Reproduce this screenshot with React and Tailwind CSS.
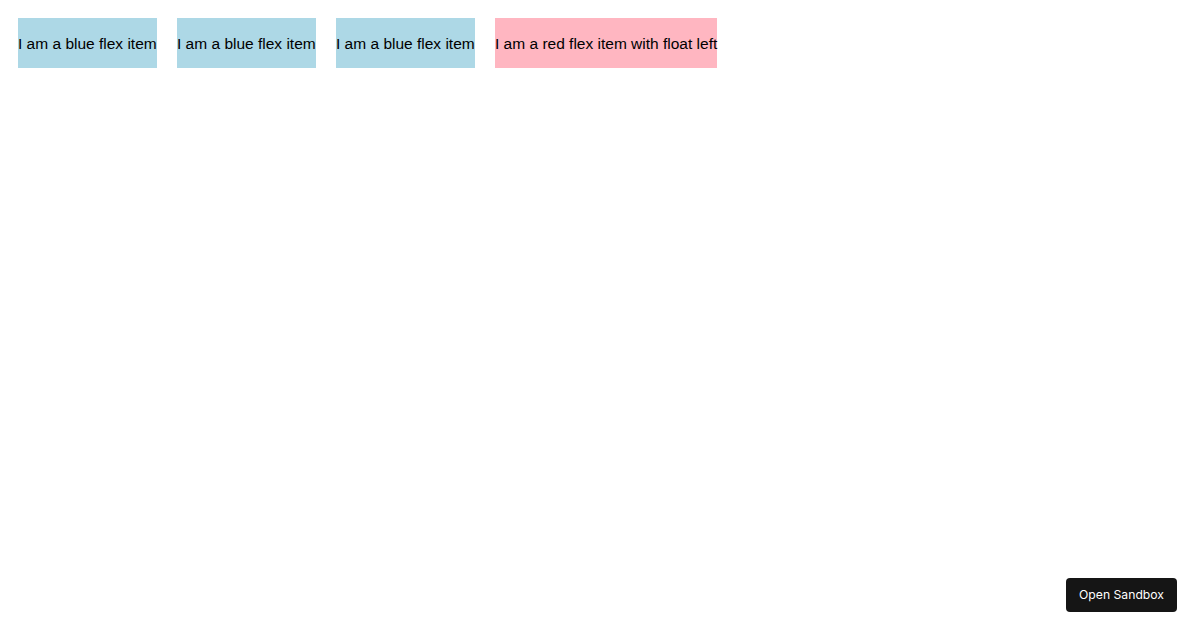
export default function App() {
  const blues = ['I am a blue flex item', 'I am a blue flex item', 'I am a blue flex item']
  return (
    <div className="relative h-[630px] w-[1200px] bg-white" style={{ fontFamily: '"Liberation Sans", Arial, sans-serif' }}>
      <div className="flex gap-5 p-[18px] text-[15.5px] text-black">
        {blues.map((t, i) => (
          <div key={i} className="flex h-[50px] w-[139px] items-center pt-px bg-[#add8e6] whitespace-nowrap">
            {t}
          </div>
        ))}
        <div className="flex h-[50px] w-[222px] items-center pt-px bg-[#ffb6c1] whitespace-nowrap">
          I am a red flex item with float left
        </div>
      </div>
      {/* floating sandbox button */}
      <button
        className="absolute right-[23px] bottom-[18px] flex h-[34px] w-[111px] items-center justify-center rounded-[4px] bg-[#151515] text-[12.2px] text-white"
        style={{ fontFamily: 'Inter, "Liberation Sans", sans-serif' }}
      >
        Open Sandbox
      </button>
    </div>
  )
}
